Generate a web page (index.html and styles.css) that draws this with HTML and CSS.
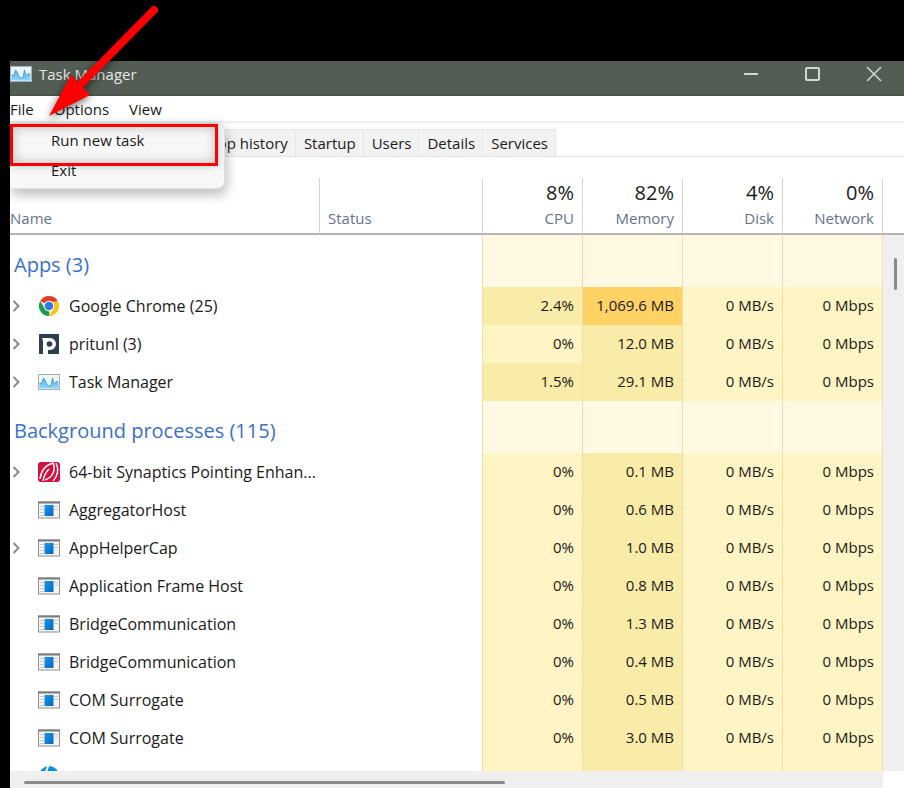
FILE: index.html
```html
<!DOCTYPE html>
<html lang="en">
<head>
  <meta charset="utf-8">
  <title>Task Manager</title>
  <link rel="stylesheet" href="styles.css">
</head>
<body>
<svg class="symbols" aria-hidden="true">
  <linearGradient id="sky" x1="0" y1="0" x2="0" y2="1">
    <stop offset="0" stop-color="#58b5ee"/>
    <stop offset="1" stop-color="#8fd8fb"/>
  </linearGradient>
  <linearGradient id="blue" x1="0" y1="0" x2="1" y2="1">
    <stop offset="0" stop-color="#1b96e6"/>
    <stop offset="1" stop-color="#0567c4"/>
  </linearGradient>
  <symbol id="taskmgr" viewBox="0 0 22 22">
    <rect x="0.5" y="3.5" width="21" height="15" fill="#eef4f8" stroke="#a3b1bb"/>
    <path d="M1.5 12l2 1 2-6 2 3 1.5 4 2 1 2 0 1.5-8 1.5 6 1.5-1 1-2 2 2v5.5h-19z" fill="url(#sky)"/>
    <path d="M1.5 12l2 1 2-6 2 3 1.5 4 2 1 2 0 1.5-8 1.5 6 1.5-1 1-2 2 2" fill="none" stroke="#4aa0d8"/>
  </symbol>
  <symbol id="chrome" viewBox="0 0 22 22">
    <path d="M11 11L2.3 6A10 10 0 0 1 19.7 6z" fill="#e33b2e"/>
    <path d="M15.3 13.5L11 21a10 10 0 0 0 9-14.5h-9z" fill="#fcc31e"/>
    <path d="M2.3 6l4.4 7.5 4.3 3 .5 0L11 21A10 10 0 0 1 2.3 6z" fill="#1f9b4b"/>
    <circle cx="11" cy="11" r="5.2" fill="#fff"/>
    <circle cx="11" cy="11" r="4.3" fill="#2f7be6"/>
  </symbol>
  <symbol id="pritunl" viewBox="0 0 22 22">
    <rect x="1" y="1" width="20" height="20" fill="#2c3e50"/>
    <path d="M4 5h8a6 6 0 0 1 0 12h-2v4H5V8z" fill="#fff"/>
    <circle cx="11.5" cy="11" r="2.8" fill="#2c3e50"/>
  </symbol>
  <symbol id="synaptics" viewBox="0 0 22 22">
    <rect x="0" y="1" width="22" height="20" rx="3" fill="#d5103f"/>
    <path d="M2 18C3 10 7 4 15 2c3 7 0 14-8 17" fill="none" stroke="#fff" stroke-width="1.5"/>
    <path d="M5 20c1-6 3-9 6-12M18 2c3 6 2 13-3 18" fill="none" stroke="#fff" stroke-width="1.5"/>
  </symbol>
  <symbol id="exe" viewBox="0 0 22 22">
    <rect x="0.5" y="3" width="21" height="16" fill="#f4f4f4" stroke="#909090"/>
    <path d="M0 3.5h22" stroke="#7d7d7d" stroke-width="2"/>
    <path d="M2.5 7.5h3M2.5 10.5h3M2.5 13.5h3M2.5 16.5h3M16.5 7.5h3M16.5 10.5h3" stroke="#a0a0a0" stroke-dasharray="1 1"/>
    <rect x="6.5" y="6" width="9" height="11" fill="url(#blue)"/>
  </symbol>
  <symbol id="hp" viewBox="0 0 22 22">
    <circle cx="11" cy="11" r="10" fill="#0a96d6"/>
    <path d="M10.5 0L6 12" stroke="#fff" stroke-width="2"/>
  </symbol>
  <symbol id="chevron" viewBox="0 0 8 12">
    <path d="M1.5 1l5 5-5 5" fill="none" stroke="#8a8a8a" stroke-width="2"/>
  </symbol>
</svg>

<main class="window">
  <header class="titlebar">
    <svg class="icon"><use href="#taskmgr"/></svg>
    <h1>Task Manager</h1>
    <div class="controls">
      <button type="button" aria-label="Minimize"><svg viewBox="0 0 16 16"><path d="M1 8h14" stroke-width="2"/></svg></button>
      <button type="button" aria-label="Maximize"><svg viewBox="0 0 16 16"><rect x="1" y="2" width="13" height="12" rx="1" stroke-width="2"/></svg></button>
      <button type="button" aria-label="Close"><svg viewBox="0 0 16 16"><path d="M1 1l14 14M15 1L1 15" stroke-width="1.5"/></svg></button>
    </div>
  </header>

  <nav class="menubar">
    <button type="button">File</button>
    <button type="button">Options</button>
    <button type="button">View</button>
    <div class="menu">
      <button type="button" class="marked">Run new task</button>
      <button type="button">Exit</button>
    </div>
    <svg class="arrow" viewBox="0 0 180 130" aria-hidden="true">
      <path d="M154 10L78 87" stroke="#f00" stroke-width="8" stroke-linecap="round"/>
      <path d="M49 116l22-41 19 20z" fill="#f00"/>
    </svg>
  </nav>

  <div class="tabs">
    <button type="button">App history</button>
    <button type="button">Startup</button>
    <button type="button">Users</button>
    <button type="button">Details</button>
    <button type="button">Services</button>
  </div>

  <div class="content">
    <div class="list">
      <table>
        <colgroup>
          <col>
          <col class="col-status">
          <col class="col-num" span="4">
        </colgroup>
        <thead>
          <tr>
            <th class="name">Name</th>
            <th class="status">Status</th>
            <th><strong>8%</strong>CPU</th>
            <th><strong>82%</strong>Memory</th>
            <th><strong>4%</strong>Disk</th>
            <th><strong>0%</strong>Network</th>
          </tr>
        </thead>
        <tbody>
          <tr class="group">
            <th colspan="2">Apps (3)</th>
            <td></td><td></td><td></td><td></td>
          </tr>
          <tr>
            <td class="proc"><div><button type="button" aria-label="Expand"><svg><use href="#chevron"/></svg></button><svg class="icon"><use href="#chrome"/></svg><span>Google Chrome (25)</span></div></td>
            <td></td>
            <td class="warm">2.4%</td><td class="hot">1,069.6 MB</td><td>0 MB/s</td><td>0 Mbps</td>
          </tr>
          <tr>
            <td class="proc"><div><button type="button" aria-label="Expand"><svg><use href="#chevron"/></svg></button><svg class="icon"><use href="#pritunl"/></svg><span>pritunl (3)</span></div></td>
            <td></td>
            <td>0%</td><td class="warm">12.0 MB</td><td>0 MB/s</td><td>0 Mbps</td>
          </tr>
          <tr>
            <td class="proc"><div><button type="button" aria-label="Expand"><svg><use href="#chevron"/></svg></button><svg class="icon"><use href="#taskmgr"/></svg><span>Task Manager</span></div></td>
            <td></td>
            <td class="warm">1.5%</td><td class="warm">29.1 MB</td><td>0 MB/s</td><td>0 Mbps</td>
          </tr>
          <tr class="group">
            <th colspan="2">Background processes (115)</th>
            <td></td><td></td><td></td><td></td>
          </tr>
          <tr>
            <td class="proc"><div><button type="button" aria-label="Expand"><svg><use href="#chevron"/></svg></button><svg class="icon"><use href="#synaptics"/></svg><span>64-bit Synaptics Pointing Enhan...</span></div></td>
            <td></td>
            <td>0%</td><td class="warm">0.1 MB</td><td>0 MB/s</td><td>0 Mbps</td>
          </tr>
          <tr>
            <td class="proc"><div><svg class="icon"><use href="#exe"/></svg><span>AggregatorHost</span></div></td>
            <td></td>
            <td>0%</td><td class="warm">0.6 MB</td><td>0 MB/s</td><td>0 Mbps</td>
          </tr>
          <tr>
            <td class="proc"><div><button type="button" aria-label="Expand"><svg><use href="#chevron"/></svg></button><svg class="icon"><use href="#exe"/></svg><span>AppHelperCap</span></div></td>
            <td></td>
            <td>0%</td><td class="warm">1.0 MB</td><td>0 MB/s</td><td>0 Mbps</td>
          </tr>
          <tr>
            <td class="proc"><div><svg class="icon"><use href="#exe"/></svg><span>Application Frame Host</span></div></td>
            <td></td>
            <td>0%</td><td class="warm">0.8 MB</td><td>0 MB/s</td><td>0 Mbps</td>
          </tr>
          <tr>
            <td class="proc"><div><svg class="icon"><use href="#exe"/></svg><span>BridgeCommunication</span></div></td>
            <td></td>
            <td>0%</td><td class="warm">1.3 MB</td><td>0 MB/s</td><td>0 Mbps</td>
          </tr>
          <tr>
            <td class="proc"><div><svg class="icon"><use href="#exe"/></svg><span>BridgeCommunication</span></div></td>
            <td></td>
            <td>0%</td><td class="warm">0.4 MB</td><td>0 MB/s</td><td>0 Mbps</td>
          </tr>
          <tr>
            <td class="proc"><div><svg class="icon"><use href="#exe"/></svg><span>COM Surrogate</span></div></td>
            <td></td>
            <td>0%</td><td class="warm">0.5 MB</td><td>0 MB/s</td><td>0 Mbps</td>
          </tr>
          <tr>
            <td class="proc"><div><svg class="icon"><use href="#exe"/></svg><span>COM Surrogate</span></div></td>
            <td></td>
            <td>0%</td><td class="warm">3.0 MB</td><td>0 MB/s</td><td>0 Mbps</td>
          </tr>
          <tr>
            <td class="proc"><div><svg class="icon"><use href="#hp"/></svg></div></td>
            <td></td>
            <td></td><td class="warm"></td><td></td><td></td>
          </tr>
        </tbody>
      </table>
    </div>
    <div class="vscroll"><div class="thumb"></div></div>
    <div class="hscroll"><div class="thumb"></div></div>
  </div>
</main>
</body>
</html>
```
FILE: styles.css
```css
*{
  box-sizing:border-box;
}

body{
  margin:0;
  height:100vh;
  padding:61px 0 0 10px;
  background:#000;
  font:15px "Open Sans", "Noto Sans", sans-serif;
  color:#1a1a1a;
  overflow:hidden;
}

button{
  border:0;
  padding:0;
  background:none;
  font:inherit;
  color:inherit;
}

.symbols{
  position:absolute;
  width:0;
  height:0;
}

.icon{
  width:22px;
  height:22px;
  flex:none;
}

.window{
  display:flex;
  flex-direction:column;
  height:100%;
  background:#fff;
}

/* title bar */
.titlebar{
  display:flex;
  align-items:center;
  height:35px;
  padding-bottom:8px;
  background:#535d53;
  border-bottom:1px solid #465046;
  color:#e4e6e4;
}

.titlebar h1{
  margin:0 auto 0 7px;
  font-size:15px;
  font-weight:400;
}

.controls{
  display:flex;
}

.controls button{
  display:flex;
  justify-content:center;
  width:62px;
}

.controls button:last-child{
  width:60px;
}

.controls svg{
  width:16px;
  height:16px;
  fill:none;
  stroke:#d3d7d3;
}

/* menu */
.menubar{
  position:relative;
  display:flex;
  gap:20px;
  height:27px;
  border-bottom:2px solid #f0f0f0;
}

.menu{
  position:absolute;
  z-index:1;
  top:27px;
  left:0;
  width:215px;
  height:66px;
  background:#f8f8f8;
  border:1px solid #e3e3e3;
  border-left:0;
  border-radius:0 8px 8px 0;
  box-shadow:2px 6px 12px rgba(0,0,0,.25);
}

.menu button{
  display:block;
  width:100%;
  height:24px;
  padding-left:41px;
  text-align:left;
}

.menu .marked{
  width:208px;
  height:42px;
  padding-bottom:10px;
  padding-left:38px;
  margin-bottom:-8px;
  border:3px solid #f00;
  box-shadow:inset 0 0 12px rgba(0,0,0,.25), 0 0 8px rgba(0,0,0,.2);
}

.arrow{
  position:absolute;
  z-index:2;
  top:-96px;
  left:-10px;
  width:180px;
  height:130px;
  filter:drop-shadow(0 2px 4px rgba(0,0,0,.6));
  pointer-events:none;
}

/* tabs */
.tabs{
  display:flex;
  height:34px;
  padding-top:6px;
  padding-left:190px;
  border-bottom:1px solid #e6e6e6;
}

.tabs button{
  padding:0 7px 0 8px;
  background:#f2f2f2;
  border:1px solid #e6e6e6;
  border-width:1px 1px 0 0;
}

/* process list */
.content{
  display:grid;
  grid-template-columns:1fr 21px;
  grid-template-rows:1fr 17px;
  flex:1;
  min-height:0;
  padding-top:21px;
}

.list{
  min-height:0;
  overflow:hidden;
}

table{
  width:100%;
  table-layout:fixed;
  border-collapse:separate;
  border-spacing:0;
}

.col-status{
  width:163px;
}

.col-num{
  width:100px;
}

th,
td{
  padding:0 8px;
  font-weight:400;
  text-align:right;
  white-space:nowrap;
}

thead th{
  height:57px;
  padding-bottom:5px;
  border-right:1px solid #d4d4d4;
  border-bottom:2px solid #b4b4b4;
  vertical-align:bottom;
  line-height:20px;
  color:#64738f;
}

thead strong{
  display:block;
  font-size:20px;
  font-weight:400;
  line-height:30px;
  color:#1a1a1a;
}

thead .name{
  padding-left:0;
  text-align:left;
}

thead .status{
  text-align:left;
}

tbody td{
  height:38px;
  padding-bottom:2px;
  background:#fff4c4;
  border-right:1px solid #f0dcaa;
}

tbody td:nth-child(1){
  background:none;
  border:0;
}

tbody td:nth-child(2){
  background:none;
}

tbody .warm{
  background:#f9eca8;
}

tbody .hot{
  background:#ffd265;
}

.group th{
  height:52px;
  padding:6px 0 0 4px;
  border-right:1px solid #f0dcaa;
  font-size:20px;
  text-align:left;
  color:#3b6fd0;
}

tbody .group td{
  height:52px;
  background:#fff8e2;
}

tbody .proc{
  padding:0;
  font-size:16px;
}

.proc div{
  display:flex;
  align-items:center;
  padding-left:28px;
  line-height:22px;
}

.proc button{
  display:flex;
  width:28px;
  margin-left:-28px;
  padding-left:2px;
}

.proc button svg{
  width:8px;
  height:12px;
}

.proc span{
  margin-left:9px;
}

/* scrollbars */
.vscroll{
  display:flex;
  justify-content:center;
  padding:23px 0 0 3px;
  margin-top:55px;
  border-top:2px solid #b4b4b4;
  background:#efefef;
}

.vscroll .thumb{
  width:3px;
  height:32px;
  border-radius:2px;
  background:#8a8a8a;
}

.hscroll{
  display:flex;
  align-items:center;
  padding:6px 0 0 14px;
  background:#efefef;
}

.hscroll .thumb{
  width:56%;
  height:3px;
  border-radius:2px;
  background:#8a8a8a;
}
```
